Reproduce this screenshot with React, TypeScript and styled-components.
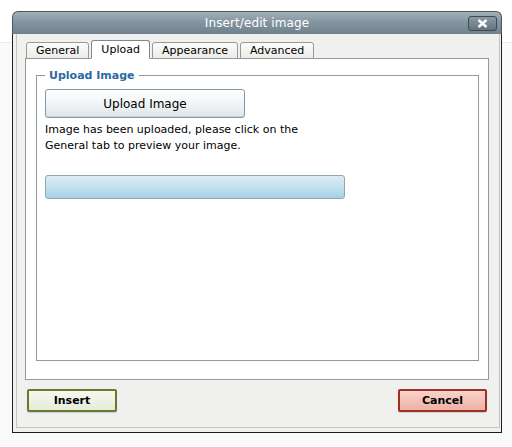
import styled, { createGlobalStyle } from 'styled-components';

const GlobalStyle = createGlobalStyle`
  html, body {
    margin: 0;
    padding: 0;
    background: #ffffff;
  }
  body {
    font-family: "DejaVu Sans", Verdana, sans-serif;
    font-size: 10px;
    color: #000;
  }
`;

const Page = styled.div`
  width: 512px;
  height: 447px;
  padding: 11px 0 0 12px;
  box-sizing: border-box;
  background: linear-gradient(#ffffff 0, #ffffff 42px, #ececec 42px, #ececec 43px, #fafafa 43px);
`;

const Window = styled.div`
  width: 490px;
  display: flex;
  flex-direction: column;
`;

const TitleBar = styled.div`
  height: 23px;
  display: grid;
  grid-template-columns: 40px 1fr 40px;
  align-items: center;
  border: 1px solid #4a5660;
  border-bottom: none;
  border-radius: 6px 6px 0 0;
  background: linear-gradient(#a2afb8 0%, #8596a2 45%, #6f818e 100%);
  box-sizing: border-box;
`;

const Title = styled.div`
  grid-column: 2;
  text-align: center;
  color: #ffffff;
  font-size: 12px;
  letter-spacing: 0.1px;
`;

const CloseButton = styled.div`
  justify-self: end;
  margin-right: 4px;
  width: 29px;
  height: 15px;
  border: 1px solid #3e4a52;
  border-radius: 3px;
  background: linear-gradient(#8a99a4, #65737e);
  display: flex;
  align-items: center;
  justify-content: center;
  box-sizing: border-box;
`;

const Body = styled.div`
  border: 1px solid #1e1e1e;
  border-top: none;
  background: #f0f0ee;
  padding: 0 1px 4px 3px;
  height: 399px;
  box-sizing: border-box;
  display: flex;
`;

const Inner = styled.div`
  flex: 1;
  border: 1px solid #c4c4c0;
  border-top: none;
  padding: 7px 10px 0 8px;
  display: flex;
  flex-direction: column;
`;

const Tabs = styled.div`
  display: flex;
  align-items: flex-end;
  gap: 2px;
  padding-left: 1px;
  height: 18px;
  position: relative;
  z-index: 1;
  margin-bottom: -1px;
`;

const Tab = styled.div<{ $active?: boolean }>`
  height: ${(p) => (p.$active ? '19px' : '17px')};
  padding: 0 9px;
  display: flex;
  align-items: center;
  justify-content: center;
  box-sizing: border-box;
  border: 1px solid ${(p) => (p.$active ? '#7b8994' : '#919b9c')};
  border-bottom: ${(p) => (p.$active ? '1px solid #ffffff' : '1px solid #919b9c')};
  border-radius: 3px 3px 0 0;
  background: ${(p) => (p.$active ? '#ffffff' : 'linear-gradient(#fcfcfb, #ecebe6)')};
  font-size: 11px;
  padding-bottom: ${(p) => (p.$active ? '1px' : '0')};
`;

const Panel = styled.div`
  height: 322px;
  box-sizing: border-box;
  border: 1px solid #919b9c;
  background: #ffffff;
  padding: 10px 9px 0 10px;
`;

const Fieldset = styled.fieldset`
  margin: 0;
  height: 292px;
  box-sizing: border-box;
  border: 1px solid #919b9c;
  padding: 7px 8px 0 8px;
`;

const Legend = styled.legend`
  padding: 0 4px;
  color: #2b6aa0;
  font-weight: bold;
  font-size: 11px;
`;

const UploadButton = styled.div`
  width: 200px;
  height: 29px;
  box-sizing: border-box;
  border: 1px solid #7e9aa8;
  border-radius: 3px;
  background: linear-gradient(#ffffff 0%, #f3f6f7 45%, #dfe5e8 100%);
  box-shadow: inset 0 -1px 0 #c9d3d8;
  display: flex;
  align-items: center;
  justify-content: center;
  font-size: 12px;
`;

const Message = styled.p`
  margin: 4px 0 0 0;
  font-size: 11px;
  line-height: 16px;
`;

const Progress = styled.div`
  margin-top: 21px;
  width: 300px;
  height: 24px;
  box-sizing: border-box;
  border: 1px solid #8fa7b2;
  border-radius: 3px;
  background: linear-gradient(#dcedf5 0%, #c6e2ef 45%, #a7d1e4 100%);
`;

const Footer = styled.div`
  display: flex;
  justify-content: space-between;
  padding: 9px 2px 0 2px;
`;

const ActionButton = styled.div<{ $tone: 'green' | 'red' }>`
  width: ${(p) => (p.$tone === 'green' ? '90px' : '89px')};
  height: 23px;
  box-sizing: border-box;
  border: 2px solid ${(p) => (p.$tone === 'green' ? '#657a2c' : '#9e2f25')};
  border-radius: 2px;
  background: ${(p) =>
    p.$tone === 'green'
      ? 'linear-gradient(#f6f8ee, #e6ebd8)'
      : 'linear-gradient(#f8d2ca, #eeb1a6)'};
  display: flex;
  align-items: center;
  justify-content: center;
  font-weight: bold;
  font-size: 11px;
  box-shadow: 0 1px 1px rgba(0, 0, 0, 0.15);
`;

export default function App() {
  return (
    <>
      <GlobalStyle />
      <Page>
        <Window>
          <TitleBar>
            <Title>Insert/edit image</Title>
            <CloseButton>
              <svg width="11" height="9" viewBox="0 0 11 9">
                <path d="M1.5 1 L9.5 8 M9.5 1 L1.5 8" stroke="#ffffff" strokeWidth="2.4" />
              </svg>
            </CloseButton>
          </TitleBar>
          <Body>
            <Inner>
              <Tabs>
                <Tab>General</Tab>
                <Tab $active>Upload</Tab>
                <Tab>Appearance</Tab>
                <Tab>Advanced</Tab>
              </Tabs>
              <Panel>
                <Fieldset>
                  <Legend>Upload Image</Legend>
                  <UploadButton>Upload Image</UploadButton>
                  <Message>
                    Image has been uploaded, please click on the
                    <br />
                    General tab to preview your image.
                  </Message>
                  <Progress />
                </Fieldset>
              </Panel>
              <Footer>
                <ActionButton $tone="green">Insert</ActionButton>
                <ActionButton $tone="red">Cancel</ActionButton>
              </Footer>
            </Inner>
          </Body>
        </Window>
      </Page>
    </>
  );
}
